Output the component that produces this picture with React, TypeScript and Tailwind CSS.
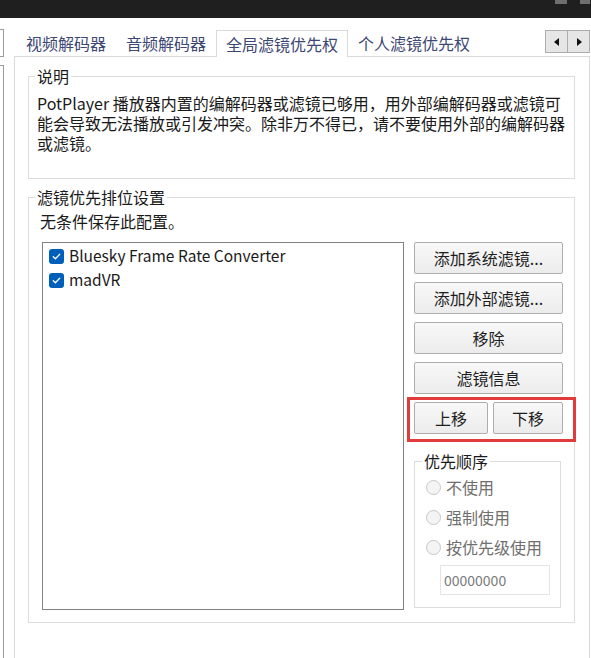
import type { ReactNode } from 'react';

const tabs = ['视频解码器', '音频解码器', '全局滤镜优先权', '个人滤镜优先权'];
const filters = ['Bluesky Frame Rate Converter', 'madVR'];
const priorities = ['不使用', '强制使用', '按优先级使用'];

function Button({ children, className = '' }: { children: ReactNode; className?: string }) {
  return (
    <div
      className={`flex h-[32px] items-center justify-center rounded-[2px] border border-[#adadad] bg-gradient-to-b from-[#f8f8f8] to-[#ececec] text-[16px] text-[#1e1e1e] ${className}`}
    >
      {children}
    </div>
  );
}

function CheckRow({ label }: { label: string }) {
  return (
    <div className="flex h-[24px] items-center gap-[5px]">
      <span className="flex h-[15px] w-[15px] items-center justify-center rounded-[3px] bg-[#005fb8]">
        <svg viewBox="0 0 12 12" className="h-[11px] w-[11px]" fill="none">
          <path d="M2.5 6.2l2.3 2.3 4.7-4.9" stroke="white" strokeWidth="1.4" strokeLinecap="round" strokeLinejoin="round" />
        </svg>
      </span>
      <span className="text-[15.5px] text-[#1a1a1a]">{label}</span>
    </div>
  );
}

export default function App() {
  return (
    <div className="relative h-[658px] w-[591px] overflow-hidden bg-white font-['Noto_Sans_CJK_SC','Noto_Sans',sans-serif] text-[#1a1a1a]">
      {/* window title strip (cut off) */}
      <div className="flex h-[18px] items-start justify-end gap-[13px] bg-[#1f1f1f] pr-[1px]">
        <span className="h-[4px] w-[12px] bg-[#6e6e6e]" />
        <span className="h-[4px] w-[10px] bg-[#6e6e6e]" />
      </div>

      <div className="flex h-[640px]">
        {/* left edge of the tree list behind */}
        <div className="flex w-[14px] shrink-0 flex-col pt-[11px]">
          <div className="h-[28px] w-[4px] border border-l-0 border-[#9c9c9c]" />
          <div className="mt-[8px] w-[4px] flex-1 border-r border-t border-[#9c9c9c]" />
        </div>

        <div className="flex flex-1 flex-col">
          {/* tabs */}
          <div className="relative z-10 flex h-[38px] items-end pl-[2px]">
            {tabs.map((t, i) =>
              i === 2 ? (
                <div
                  key={t}
                  className="-mb-px flex h-[27px] items-center border border-b-0 border-[#d9d9d9] bg-white px-[9px] text-[16px] text-[#3d4773]"
                >
                  {t}
                </div>
              ) : (
                <div key={t} className="flex h-[26px] items-center px-[10px] text-[16px] text-[#3d4773]">
                  {t}
                </div>
              ),
            )}
            <div className="mb-[3px] ml-auto mr-[1px] flex h-[23px] self-end">
              <div className="flex w-[23px] items-center justify-center border border-[#acacac] bg-[#e6e6e6]">
                <svg viewBox="0 0 6 8" className="h-[8px] w-[6px]">
                  <path d="M5 0v8L0 4z" fill="#111" />
                </svg>
              </div>
              <div className="-ml-px flex w-[23px] items-center justify-center border border-[#acacac] bg-[#e6e6e6]">
                <svg viewBox="0 0 6 8" className="h-[8px] w-[6px]">
                  <path d="M1 0v8l5-4z" fill="#111" />
                </svg>
              </div>
            </div>
          </div>

          {/* tab page */}
          <div className="mr-[1px] flex-1 border border-b-0 border-[#d9d9d9] pl-[13px] pr-[14px] pt-[9px]">
            <fieldset className="border border-[#dcdcdc] pb-[25px] pl-[6px] pr-[6px]">
              <legend className="h-[20px] px-[2px] text-[16px] leading-[20px]">说明</legend>
              <p className="whitespace-nowrap pl-[2px] pt-[7px] text-[16px] leading-[20px]">
                PotPlayer 播放器内置的编解码器或滤镜已够用，用外部编解码器或滤镜可
                <br />
                能会导致无法播放或引发冲突。除非万不得已，请不要使用外部的编解码器
                <br />
                或滤镜。
              </p>
            </fieldset>

            <fieldset className="mt-[8px] border border-[#dcdcdc] pb-[12px] pl-[6px]">
              <legend className="h-[20px] px-[2px] text-[16px] leading-[20px]">滤镜优先排位设置</legend>
              <div className="ml-[5px] mt-[4px] text-[16px] leading-[20px]">无条件保存此配置。</div>

              <div className="ml-[7px] mt-[11px] flex gap-[10px]">
                <div className="h-[368px] w-[362px] border border-[#828282] pl-[6px] pt-[1px]">
                  {filters.map((f) => (
                    <CheckRow key={f} label={f} />
                  ))}
                </div>

                <div className="flex w-[149px] flex-col gap-[8px]">
                  <Button>添加系统滤镜...</Button>
                  <Button>添加外部滤镜...</Button>
                  <Button>移除</Button>
                  <Button>滤镜信息</Button>
                  <div className="flex gap-[5px]">
                    <Button className="w-[74px]">上移</Button>
                    <Button className="w-[70px]">下移</Button>
                  </div>

                  <fieldset className="mt-[9px] w-[147px] border border-[#dcdcdc] pb-[12px] pl-[7px]">
                    <legend className="h-[20px] px-[2px] text-[16px] leading-[20px] text-[#1a1a1a]">优先顺序</legend>
                    <div className="mt-[1px] pl-[4px]">
                      {priorities.map((p) => (
                        <div key={p} className="flex h-[30px] items-center gap-[5px]">
                          <span className="h-[15px] w-[15px] rounded-full border border-[#c8c8c8] bg-[#f4f4f4]" />
                          <span className="text-[16px] text-[#6f6f6f]">{p}</span>
                        </div>
                      ))}
                    </div>
                    <div className="ml-[18px] mt-[3px] flex h-[30px] w-[110px] items-center border border-[#e3e3e3] px-[3px] text-[14px] text-[#7a7a7a]">
                      00000000
                    </div>
                  </fieldset>
                </div>
              </div>
            </fieldset>
          </div>
        </div>
      </div>

      {/* red annotation box */}
      <div className="pointer-events-none absolute left-[407px] top-[397px] h-[45px] w-[169px] border-[3px] border-[#e23b3b]" />
    </div>
  );
}
